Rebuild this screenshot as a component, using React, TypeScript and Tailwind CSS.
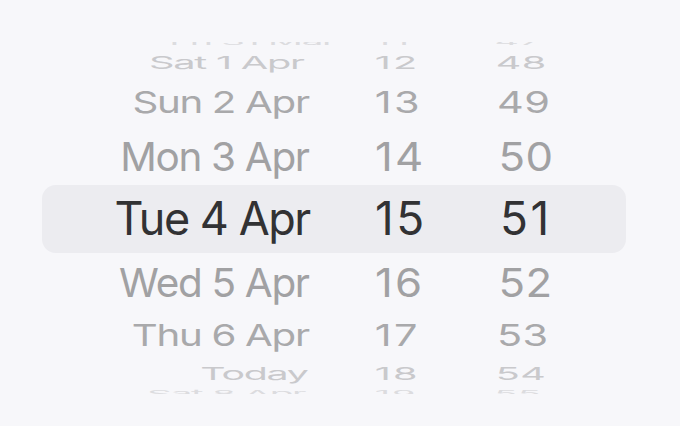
import React from "react";

type Row = {
  date: string;
  hour: string;
  minute: string;
  cy: number;
  v: number;
  h: number;
  hn: number;
  dx: number;
  color: string;
};

const rows: Row[] = [
  { date: "Fri 31 Mar", hour: "11", minute: "47", cy: 42, v: 0.2, h: 0.84, hn: 0.82, dx: 27, color: "#dcdcdf" },
  { date: "Sat 1 Apr", hour: "12", minute: "48", cy: 63, v: 0.38, h: 0.865, hn: 0.86, dx: -5, color: "#c9c9cc" },
  { date: "Sun 2 Apr", hour: "13", minute: "49", cy: 101.5, v: 0.66, h: 0.875, hn: 0.9, dx: 0, color: "#a9a9ab" },
  { date: "Mon 3 Apr", hour: "14", minute: "50", cy: 155.5, v: 0.866, h: 0.88, hn: 0.95, dx: 0, color: "#a1a1a3" },
  { date: "Tue 4 Apr", hour: "15", minute: "51", cy: 217.5, v: 1, h: 0.978, hn: 1, dx: 0, color: "#323234" },
  { date: "Wed 5 Apr", hour: "16", minute: "52", cy: 281.5, v: 0.866, h: 0.88, hn: 0.95, dx: 0, color: "#a1a1a3" },
  { date: "Thu 6 Apr", hour: "17", minute: "53", cy: 335, v: 0.66, h: 0.875, hn: 0.9, dx: 0, color: "#a9a9ab" },
  { date: "Today", hour: "18", minute: "54", cy: 374, v: 0.38, h: 0.855, hn: 0.86, dx: -1, color: "#c9c9cc" },
  { date: "Sat 8 Apr", hour: "19", minute: "55", cy: 394, v: 0.2, h: 0.84, hn: 0.82, dx: -3, color: "#dcdcdf" },
];

const CLIP_TOP = 42;

function Digits({ text }: { text: string }) {
  return (
    <>
      {text.split("").map((c, i) =>
        c === "1" ? (
          <span key={i} className="inline-block px-[2px]">
            {c}
          </span>
        ) : (
          <span key={i}>{c}</span>
        )
      )}
    </>
  );
}

function Column({
  field,
  align,
  originX,
  className,
}: {
  field: "date" | "hour" | "minute";
  align: "right" | "left";
  originX: string;
  className: string;
}) {
  const isDate = field === "date";
  return (
    <div className={`relative h-full ${className}`}>
      {rows.map((r, i) => (
        <div
          key={i}
          className={`absolute inset-x-0 h-[56px] leading-[56px] whitespace-nowrap ${
            align === "right" ? "text-right" : "text-left"
          }`}
          style={{
            top: r.cy - CLIP_TOP - 28,
            color: r.color,
            transform: `translateX(${isDate ? r.dx : 0}px) scale(${isDate ? r.h : r.hn}, ${r.v})`,
            transformOrigin: `${originX} 50%`,
          }}
        >
          {isDate ? r.date : <Digits text={r[field]} />}
        </div>
      ))}
    </div>
  );
}

export default function App() {
  return (
    <div
      className="relative w-[680px] h-[426px] overflow-hidden bg-[#f7f7fa] pt-[185px] pl-[42px]"
      style={{ fontFamily: "Inter, 'Noto Sans', sans-serif" }}
    >
      <div className="w-[584px] h-[68px] rounded-[14px] bg-[#ececf0]" />
      <div className="absolute inset-x-0 top-[42px] h-[352px] overflow-hidden flex text-[46px]">
        <Column
          field="date"
          align="right"
          originX="300px"
          className="w-[310px] shrink-0 tracking-[-1.5px]"
        />
        <Column
          field="hour"
          align="left"
          originX="0px"
          className="ml-[63px] w-[80px] shrink-0 tracking-[0.5px]"
        />
        <Column
          field="minute"
          align="left"
          originX="-30px"
          className="ml-[47px] w-[100px] shrink-0 tracking-[0.5px]"
        />
      </div>
    </div>
  );
}
